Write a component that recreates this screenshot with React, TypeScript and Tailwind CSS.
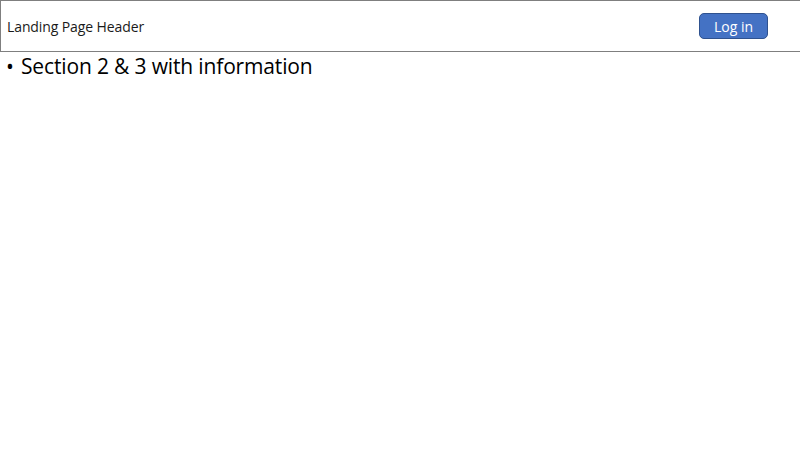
export default function App() {
  return (
    <div className="w-[800px] h-[450px] bg-white overflow-hidden" style={{ fontFamily: '"Open Sans", "Noto Sans", sans-serif' }}>
      <header className="h-[52px] border-t border-l border-b border-[#7f7f7f] flex items-center justify-between pl-[6px] pr-[32px]">
        <span className="text-[14px] text-[#1a1a1a] tracking-[-0.1px]">Landing Page Header</span>
        <button className="w-[69px] h-[26px] bg-[#4472c4] border border-[#2f528f] rounded-[5px] text-white text-[14px] leading-none flex items-center justify-center pt-[1px]">Log in</button>
      </header>
      <div className="flex items-center pl-[6px] text-[21px] text-black leading-[28px] tracking-[-0.15px]">
        <span className="w-[15px]">•</span>
        <span>Section 2 &amp; 3 with information</span>
      </div>
    </div>
  );
}
